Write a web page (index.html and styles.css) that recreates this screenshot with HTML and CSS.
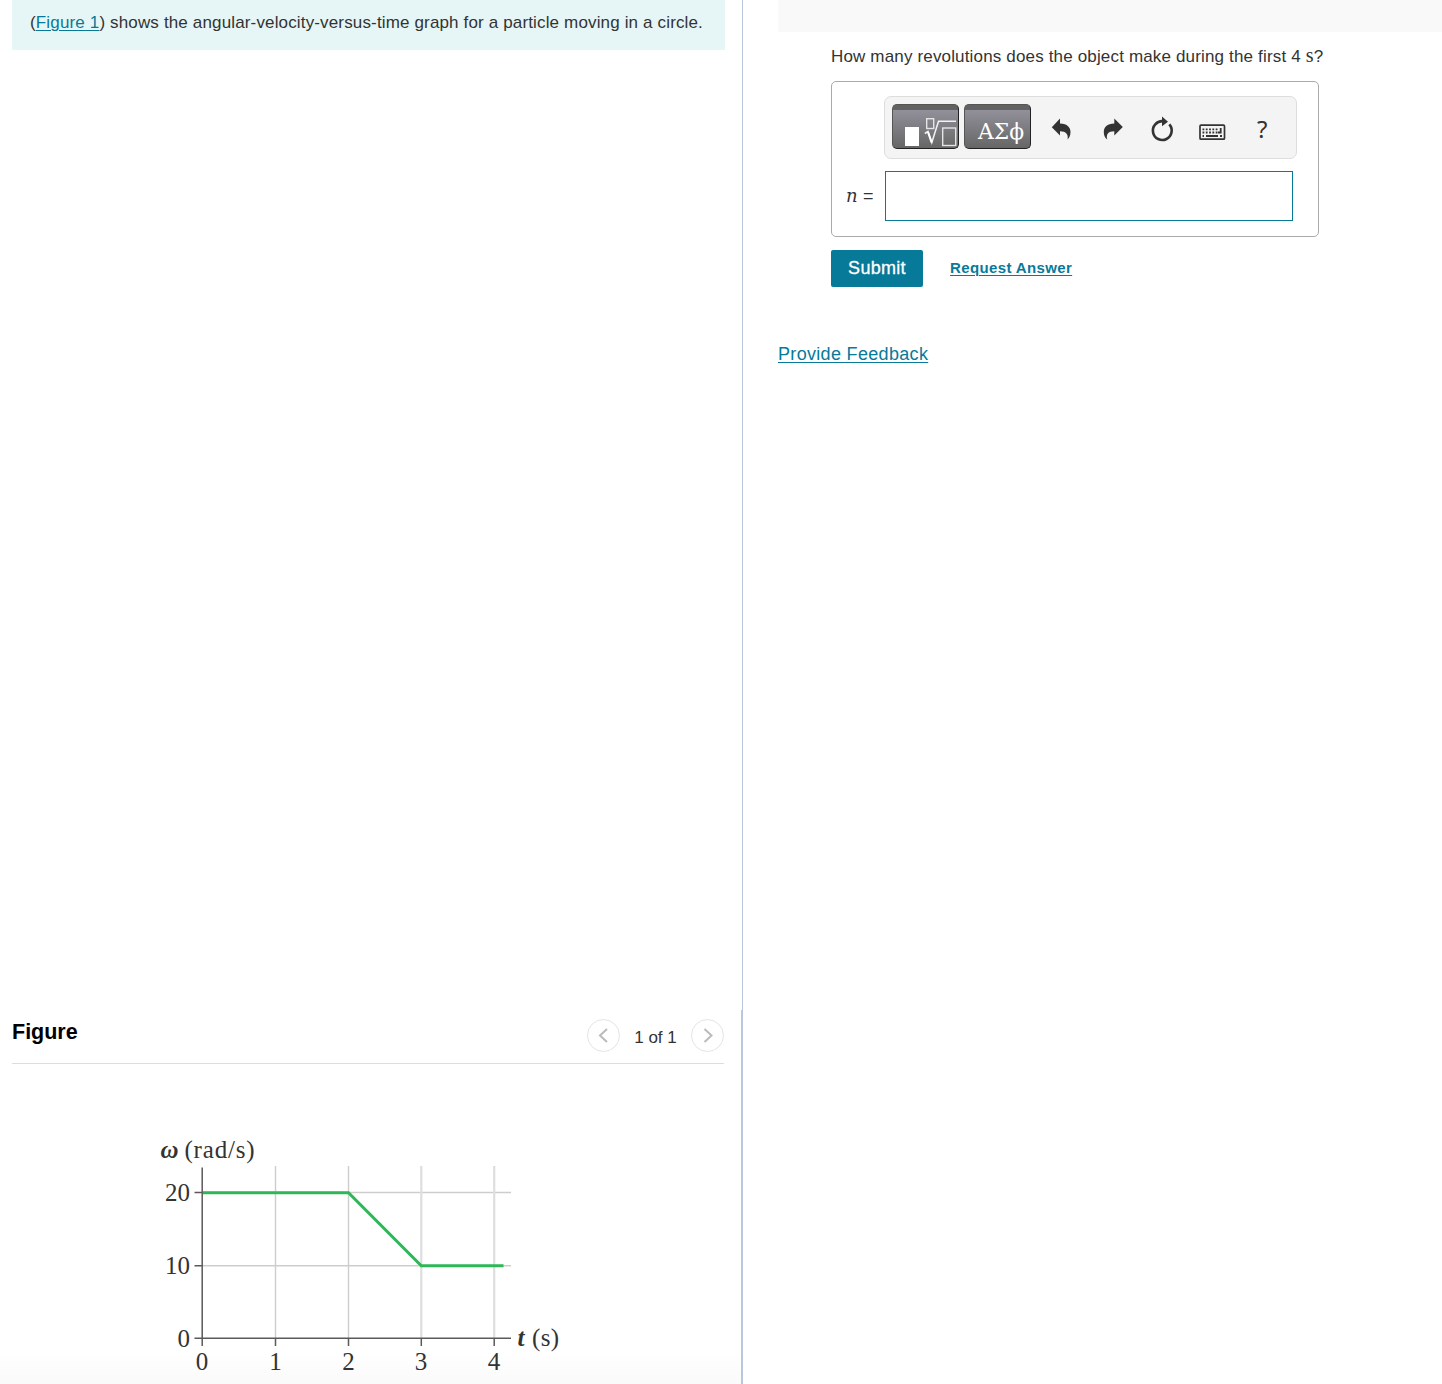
FILE: index.html
```html
<!DOCTYPE html>
<html lang="en">
<head>
  <meta charset="UTF-8" />
  <meta name="viewport" content="width=device-width, initial-scale=1.0"/>
  <title>Angular Velocity Problem</title>
  <link rel="stylesheet" href="styles.css">
</head>
<body>
  <div class="page">

    <!-- LEFT: problem intro and figure -->
    <div class="left-pane">
      <div class="intro-area">
        <div class="intro">(<a href="#figure">Figure 1</a>) shows the angular-velocity-versus-time graph for a particle moving in a circle.</div>
      </div>

      <section class="figure-panel" id="figure">
        <div class="figure-header">
          <h2>Figure</h2>
          <div class="pager">
            <button class="pager-btn" aria-label="Previous">
              <svg width="31" height="31" viewBox="0 0 31 31"><path d="M19 9 L12 15.500 L19 22"/></svg>
            </button>
            <span class="pager-text">1 of 1</span>
            <button class="pager-btn" aria-label="Next">
              <svg width="31" height="31" viewBox="0 0 31 31"><path d="M12.500 9 L19.500 15.500 L12.500 22"/></svg>
            </button>
          </div>
        </div>

        <svg class="graph" width="712" height="320" viewBox="12 1064 712 320">
          <g class="grid">
            <path d="M202 1192.5H511M202 1265.7H511"/>
            <path d="M275.5 1166V1338M348.5 1166V1338"/>
            <path class="wide" d="M421.3 1166V1338M494.2 1166V1338"/>
          </g>
          <g class="axes">
            <path d="M202.2 1167.500V1346M194.500 1338.300H511"/>
            <path d="M194.500 1192.500H202M194.500 1265.700H202"/>
            <path d="M275.500 1338V1346M348.500 1338V1346M421.300 1338V1346M494.200 1338V1346"/>
          </g>
          <path class="curve" d="M203 1192.700H348.500L421.300 1265.700H503.500"/>
          <g class="labels">
            <text class="symbol" x="160.500" y="1157.500" textLength="18" lengthAdjust="spacingAndGlyphs">ω</text>
            <text x="184.500" y="1157.500" textLength="70">(rad/s)</text>
            <text class="end" x="190" y="1201">20</text>
            <text class="end" x="190" y="1273.500">10</text>
            <text class="end" x="190" y="1346.500">0</text>
            <text class="mid" x="202" y="1369.500">0</text>
            <text class="mid" x="275.500" y="1369.500">1</text>
            <text class="mid" x="348.500" y="1369.500">2</text>
            <text class="mid" x="421" y="1369.500">3</text>
            <text class="mid" x="494" y="1369.500">4</text>
            <text class="symbol" x="517.500" y="1346">t</text>
            <text x="532" y="1346" textLength="27">(s)</text>
          </g>
        </svg>
      </section>
    </div>

    <!-- RIGHT: question and answer -->
    <div class="right-pane">
      <div class="part-header"></div>
      <div class="question">
        <p class="prompt">How many revolutions does the object make during the first 4 <span class="unit">s</span>?</p>

        <div class="answer-box">
          <div class="toolbar">
            <button class="dark-btn" aria-label="Templates">
              <svg width="65" height="43" viewBox="893 105 65 43">
                <rect x="905" y="127" width="14" height="19" fill="#fff"/>
                <rect x="926.700" y="118.700" width="7" height="9.800" fill="none" stroke="#e4e4e4" stroke-width="1.400"/>
                <rect x="942.700" y="128" width="13" height="17.500" fill="none" stroke="#e4e4e4" stroke-width="1.400"/>
                <path d="M924.800 133.500L928 131.500L931.800 142.500L938.500 121.300H956" fill="none" stroke="#f2f2f2" stroke-width="1.500"/>
                <path d="M928 132L931.600 142.500" stroke="#fff" stroke-width="2"/>
              </svg>
            </button>
            <button class="dark-btn" aria-label="Symbols">
              <svg width="65" height="43" viewBox="965 105 65 43">
                <text class="greek" x="978" y="139" textLength="46" lengthAdjust="spacingAndGlyphs">ΑΣϕ</text>
              </svg>
            </button>
            <svg class="tools" width="260" height="45" viewBox="1036 104 260 45">
              <path d="M1051.800 127.300L1060 118.600V123.500C1067.500 123.700 1070.500 127.500 1070.500 132C1070.500 135 1069.500 137.500 1067.500 139.500C1068.700 134.500 1066 131.300 1060 131.300V135.500Z"/>
              <path d="M1122.800 127L1114.300 118.600V123.500C1107 123.500 1103.800 127.500 1103.800 132C1103.800 135.500 1105 138 1107.300 139.500C1105.800 134.500 1108 131.200 1114.300 131.200V135.500Z"/>
              <path class="ring" d="M1163 121.200A9.400 9.400 0 1 0 1169.300 124.300"/>
              <path d="M1162 116.500L1168 121.700L1162 126.300Z"/>
              <rect class="key-frame" x="1200" y="125.200" width="24.500" height="14" rx="1"/>
              <path class="keys" d="M1202.500 129.300H1219M1202.500 132.500H1218"/>
              <path class="bar" d="M1220.700 128V132.500H1218M1202.500 136H1204M1206 136H1218M1220 136H1222"/>
              <text class="help" x="1257" y="138">?</text>
            </svg>
          </div>
          <div class="input-row">
            <label for="answer"><i>n</i><span>=</span></label>
            <input type="text" id="answer" />
          </div>
        </div>

        <div class="actions">
          <button class="submit">Submit</button>
          <a class="request" href="#">Request Answer</a>
        </div>
      </div>
      <a class="feedback" href="#">Provide Feedback</a>
    </div>

  </div>
</body>
</html>
```
FILE: styles.css
```css
* {
  box-sizing: border-box;
}

body {
  margin: 0;
  font-family: "Liberation Sans", Arial, sans-serif;
  font-size: 17px;
  color: #333;
  background: #fff;
}

a {
  color: #077a99;
  text-decoration: underline;
  text-decoration-thickness: 1px;
  text-underline-offset: 2px;
}

button {
  font-family: inherit;
  padding: 0;
  cursor: pointer;
}

.page {
  display: flex;
  height: 1384px;
  overflow: hidden;
}

.left-pane {
  display: flex;
  flex-direction: column;
  width: 743px;
}

.intro-area {
  height: 1010px;
  padding: 0 17px 0 12px;
  border-right: 1px solid #b8c6de;
}

.intro {
  height: 50px;
  padding-left: 18px;
  line-height: 45px;
  letter-spacing: 0.15px;
  white-space: nowrap;
  background: #e6f6f6;
}

.figure-panel {
  height: 374px;
  padding: 0 17px 0 12px;
  border-right: 2px solid #b8c6de;
  background: linear-gradient(#fff 342px, #fafafa);
}

.figure-header {
  display: flex;
  justify-content: space-between;
  height: 54px;
  border-bottom: 1px solid #ddd;
}

.figure-header h2 {
  margin: 0;
  font-size: 21.5px;
  line-height: 44px;
  color: #000;
}

.pager {
  display: flex;
  align-items: center;
  height: 33px;
  margin-top: 9px;
}

.pager-btn {
  width: 33px;
  height: 33px;
  border: 1px solid #e4e4e4;
  border-radius: 50%;
  background: #fff;
}

.pager-btn svg {
  display: block;
  fill: none;
  stroke: #bbb;
  stroke-width: 2;
}

.pager-text {
  width: 71px;
  padding-top: 5px;
  text-align: center;
}

.graph {
  display: block;
}

.grid path {
  stroke: #cdcdcd;
  stroke-width: 1.4;
}

.grid .wide {
  stroke: #dedede;
  stroke-width: 2.2;
}

.axes path {
  stroke: #5c595c;
  stroke-width: 1.5;
}

.curve {
  fill: none;
  stroke: #2db757;
  stroke-width: 3;
}

.labels {
  font-family: "Liberation Serif", "Times New Roman", serif;
  font-size: 25px;
  fill: #333;
}

.labels .symbol {
  font-style: italic;
  font-weight: bold;
}

.labels .end {
  text-anchor: end;
}

.labels .mid {
  text-anchor: middle;
}

.right-pane {
  flex: 1;
  padding-left: 35px;
}

.part-header {
  height: 32px;
  background: #f9f9f9;
}

.question {
  padding-left: 53px;
}

.prompt {
  margin: 0;
  height: 49px;
  line-height: 46px;
  letter-spacing: 0.16px;
  white-space: nowrap;
}

.unit {
  font-family: "Liberation Serif", serif;
  font-size: 20px;
}

.answer-box {
  width: 488px;
  height: 156px;
  padding: 14px 21px 0 14px;
  border: 1px solid #aaa;
  border-radius: 5px;
}

.toolbar {
  display: flex;
  gap: 5px;
  width: 413px;
  height: 63px;
  margin-left: 38px;
  padding: 7px;
  border: 1px solid #ddd;
  border-radius: 7px;
  background: #f4f4f4;
}

.dark-btn {
  flex: none;
  width: 67px;
  height: 45px;
  border: 1px solid #555;
  border-right-color: #222;
  border-bottom-color: #222;
  border-radius: 5px;
  background: linear-gradient(#626262 5px, #92909a 5px, #666 100%);
}

.dark-btn svg {
  display: block;
}

.greek {
  font-family: "DejaVu Serif", serif;
  font-size: 22px;
  fill: #fff;
}

.tools {
  flex: none;
  fill: #333;
}

.ring {
  fill: none;
  stroke: #333;
  stroke-width: 2.6;
}

.key-frame {
  fill: none;
  stroke: #333;
  stroke-width: 1.7;
}

.keys {
  fill: none;
  stroke: #333;
  stroke-width: 1.8;
  stroke-dasharray: 1.8 1.5;
}

.bar {
  fill: none;
  stroke: #333;
  stroke-width: 1.8;
}

.help {
  font-family: "Noto Sans", sans-serif;
  font-size: 24px;
}

.input-row {
  display: flex;
  align-items: center;
  margin-top: 12px;
}

.input-row label {
  display: flex;
  align-items: baseline;
  width: 39px;
  padding-bottom: 1px;
}

.input-row i {
  width: 17px;
  font-family: "DejaVu Serif", serif;
  font-size: 18px;
}

.input-row span {
  font-size: 18px;
}

.input-row input {
  width: 408px;
  height: 50px;
  border: 1px solid #077a99;
  background: #fff;
}

.actions {
  display: flex;
  align-items: center;
  gap: 27px;
  margin-top: 13px;
}

.submit {
  width: 92px;
  height: 37px;
  border: none;
  border-radius: 2px;
  font-size: 18px;
  letter-spacing: 0.3px;
  -webkit-text-stroke: 0.3px #fff;
  color: #fff;
  background: #077a99;
}

.request {
  padding-bottom: 2px;
  font-size: 15px;
  font-weight: bold;
  letter-spacing: 0.37px;
}

.feedback {
  display: inline-block;
  margin-top: 57px;
  font-size: 18px;
  letter-spacing: 0.32px;
}
```
